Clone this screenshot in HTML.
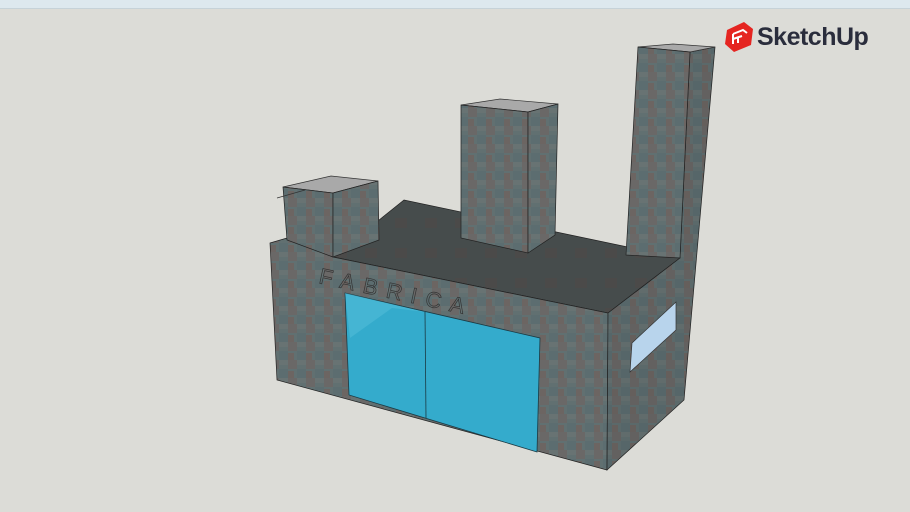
<!DOCTYPE html>
<html><head><style>
html,body{margin:0;padding:0;width:910px;height:512px;overflow:hidden;background:#dcdcd7;}
.top{position:absolute;left:0;top:0;width:910px;height:8px;background:#dde8ee;border-bottom:1px solid #c6d2d8}
.logo{position:absolute;left:757px;top:23px;font:bold 25px "Liberation Sans",sans-serif;color:#2a2d3c;letter-spacing:-0.5px}
</style></head><body>
<div class="top"></div>
<svg width="910" height="512" style="position:absolute;left:0;top:0">
<defs>
<pattern id="t" width="18" height="18" patternUnits="userSpaceOnUse">
<rect width="18" height="18" fill="#617071"/>
<rect x="0" y="0" width="9" height="9" fill="#6a6867"/>
<rect x="9" y="9" width="9" height="9" fill="#5c6d70"/>
<rect x="9" y="0" width="9" height="5" fill="#687373"/>
<rect x="0" y="11" width="6" height="7" fill="#6c6562"/>
</pattern>
<pattern id="r" width="30" height="30" patternUnits="userSpaceOnUse">
<rect width="30" height="30" fill="#464c4c"/>
<rect x="5" y="8" width="12" height="10" fill="#4b4a49"/>
</pattern>
</defs>
<polygon points="333,257 404,200 680,258 608,313" fill="url(#r)" stroke="#222" stroke-width="0.7"/>
<polygon points="270,243 287,238 333,257 608,313 607,470 277,380" fill="url(#t)" stroke="#222" stroke-width="0.7"/>
<polygon points="608,313 680,258 690,52 715,47 684,400 607,470" fill="url(#t)" stroke="#222" stroke-width="0.7"/>
<polygon points="608,313 680,258 690,52 715,47 684,400 607,470" fill="#000" opacity="0.06"/>
<polygon points="283,187 331,176 378,181 333,193" fill="#a9a9a9" stroke="#333" stroke-width="0.7"/>
<polygon points="283,187 333,193 333,257 287,240" fill="url(#t)" stroke="#222" stroke-width="0.7"/>
<polygon points="333,193 378,181 379,240 333,257" fill="url(#t)" stroke="#222" stroke-width="0.7"/>
<line x1="277" y1="198" x2="305" y2="190" stroke="#333" stroke-width="0.7"/>
<polygon points="461,105 500,99 558,104 528,112" fill="#a9a9a9" stroke="#333" stroke-width="0.7"/>
<polygon points="461,105 528,112 528,253 461,238" fill="url(#t)" stroke="#222" stroke-width="0.7"/>
<polygon points="528,112 558,104 555,235 528,253" fill="url(#t)" stroke="#222" stroke-width="0.7"/>
<polygon points="638,47 673,44 715,47 690,52" fill="#a9a9a9" stroke="#333" stroke-width="0.7"/>
<polygon points="638,47 690,52 680,258 626,255" fill="url(#t)" stroke="#222" stroke-width="0.7"/>
<polygon points="345,293 540,338 537,452 349,395" fill="#34abcc" stroke="#1a3a44" stroke-width="0.8"/>
<polygon points="345,293 425,312 392,308 350,338" fill="#55c0da" opacity="0.5"/>
<line x1="425" y1="312" x2="426" y2="418" stroke="#1a3a44" stroke-width="0.8"/>
<polygon points="632,343 676,302 676,330 630,372" fill="#b8d4ec" stroke="#333" stroke-width="0.7"/>
<text x="318" y="283" font-family="Liberation Sans,sans-serif" font-size="22" fill="none" stroke="#333" stroke-width="0.7" letter-spacing="9" transform="rotate(12 318 283)">FABRICA</text>
<polygon points="727,30 744,22 753,29 751,45 734,52 725,44" fill="#e52521"/>
<path d="M733,34 l10,-4 l4,3 M733,39 l9,-3 M733,34 v10 M738,38 v5" stroke="#fff" stroke-width="2" fill="none"/>
</svg>
<div class="logo">SketchUp</div>
</body></html>
